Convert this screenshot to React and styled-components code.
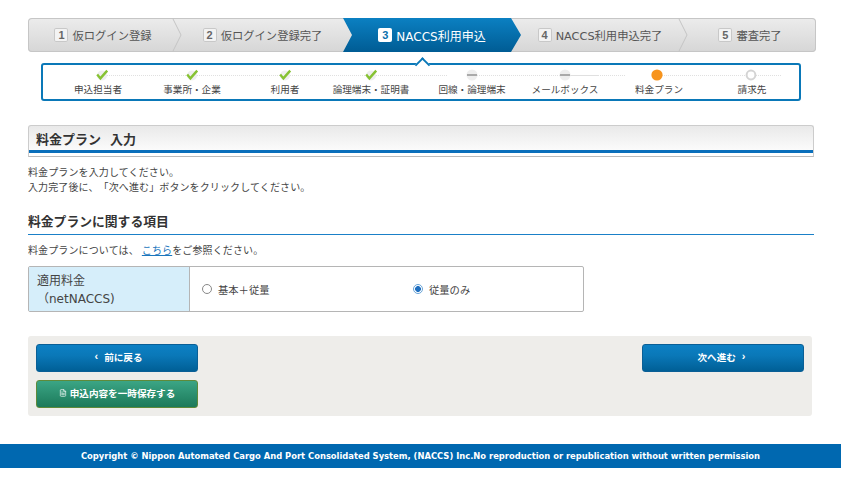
import React from "react";
import styled, { createGlobalStyle } from "styled-components";
import { FileText } from "lucide-react";

const GlobalStyle = createGlobalStyle`
  html, body {
    margin: 0;
    padding: 0;
    background: #fff;
  }
  body {
    font-family: "Noto Sans CJK JP", "Noto Sans", sans-serif;
    color: #333;
    font-size: 10px;
    text-spacing-trim: space-all;
  }
`;

const steps = [
  { no: 1, label: "仮ログイン登録", width: 150 },
  { no: 2, label: "仮ログイン登録完了", width: 169 },
  { no: 3, label: "NACCS利用申込", width: 169, active: true },
  { no: 4, label: "NACCS利用申込完了", width: 168 },
  { no: 5, label: "審査完了", width: 132 },
];

const subSteps = [
  { label: "申込担当者", state: "done", shift: -8 },
  { label: "事業所・企業", state: "done" },
  { label: "利用者", state: "done" },
  { label: "論理端末・証明書", state: "done" },
  { label: "回線・論理端末", state: "skip" },
  { label: "メールボックス", state: "skip" },
  { label: "料金プラン", state: "current", shift: 4 },
  { label: "請求先", state: "todo", shift: 2 },
];

const StepMark = ({ state }) => {
  if (state === "done") {
    return (
      <svg width="14" height="12" viewBox="0 0 14 12">
        <circle cx="7" cy="6.5" r="5" fill="#eeeeee" />
        <path d="M2.2 5.6 L5.4 9.4 L12.2 1.6" fill="none" stroke="#86c232" strokeWidth="2.4" />
      </svg>
    );
  }
  if (state === "skip") {
    return (
      <svg width="14" height="12" viewBox="0 0 14 12">
        <circle cx="7" cy="6" r="5.5" fill="#eeeeee" />
        <rect x="2" y="5" width="10" height="2" fill="#aaaaaa" />
      </svg>
    );
  }
  if (state === "current") {
    return (
      <svg width="14" height="12" viewBox="0 0 14 12">
        <circle cx="7" cy="6" r="5.6" fill="#f7941d" />
      </svg>
    );
  }
  return (
    <svg width="14" height="12" viewBox="0 0 14 12">
      <circle cx="7" cy="6" r="4.4" fill="#fff" stroke="#d4d4d4" strokeWidth="2" />
    </svg>
  );
};

const Divider = () => (
  <ChevronLine width="10" height="34" viewBox="0 0 10 34">
    <path d="M0.5 0 L9 17 L0.5 34" fill="none" stroke="#c4c4c4" />
  </ChevronLine>
);

const App = () => (
  <>
    <GlobalStyle />
    <Page>
      <Stepper>
        {steps.map((s, i) => (
          <Step key={s.no} $width={s.width} $active={s.active}>
            <StepNo $active={s.active}>{s.no}</StepNo>
            <span>{s.label}</span>
            {!s.active && i < steps.length - 1 && !steps[i + 1].active && <Divider />}
          </Step>
        ))}
      </Stepper>

      <SubSteps>
        {subSteps.map((s) => (
          <SubStep key={s.label}>
            <StepMark state={s.state} />
            <SubLabel $shift={s.shift}>{s.label}</SubLabel>
          </SubStep>
        ))}
      </SubSteps>

      <PageTitle>料金プラン 入力</PageTitle>

      <Lead>
        料金プランを入力してください。
        <br />
        入力完了後に、「次へ進む」ボタンをクリックしてください。
      </Lead>

      <SectionTitle>料金プランに関する項目</SectionTitle>
      <Note>
        料金プランについては、<a href="#plan">こちら</a>をご参照ください。
      </Note>

      <PlanTable>
        <PlanHead>
          適用料金
          <br />
          （netNACCS)
        </PlanHead>
        <PlanBody>
          <RadioLabel>
            <Radio />
            基本＋従量
          </RadioLabel>
          <RadioLabel>
            <Radio $checked />
            従量のみ
          </RadioLabel>
        </PlanBody>
      </PlanTable>

      <Actions>
        <ActionColumn>
          <ActionButton>
            <Arrow>‹</Arrow>前に戻る
          </ActionButton>
          <ActionButton $save>
            <FileText size={8} strokeWidth={2} />
            申込内容を一時保存する
          </ActionButton>
        </ActionColumn>
        <ActionButton>
          次へ進む<Arrow>›</Arrow>
        </ActionButton>
      </Actions>
    </Page>
    <Footer>
      Copyright © Nippon Automated Cargo And Port Consolidated System, (NACCS) Inc.No reproduction or republication
      without written permission
    </Footer>
  </>
);

const Page = styled.div`
  width: 788px;
  margin-left: 28px;
  padding-top: 18px;
`;

const Stepper = styled.div`
  display: flex;
  height: 34px;
  border-radius: 4px;
  background: linear-gradient(#ececec, #d6d6d6);
  box-shadow: inset 0 0 0 1px #c6c6c6;
`;

const Step = styled.div`
  position: relative;
  flex: none;
  width: ${(p) => p.$width}px;
  display: flex;
  align-items: center;
  justify-content: center;
  gap: 4px;
  font-family: "DejaVu Sans", "Noto Sans CJK JP", sans-serif;
  font-size: ${(p) => (p.$active ? 12 : 11.3)}px;
  color: ${(p) => (p.$active ? "#fff" : "#555")};
  ${(p) =>
    p.$active &&
    `
    background: linear-gradient(#0b80c2, #005c94);
    clip-path: polygon(0 0, 168px 0, 178px 17px, 168px 34px, 0 34px, 9px 17px);
    margin-left: -4px;
    width: 178px;
    margin-right: -5px;
    z-index: 1;
  `}
`;

const StepNo = styled.span`
  display: inline-flex;
  align-items: center;
  justify-content: center;
  width: 14px;
  height: 14px;
  border-radius: 2px;
  font-size: 11px;
  font-weight: 700;
  font-family: "Liberation Sans", sans-serif;
  background: ${(p) => (p.$active ? "#fff" : "#f3f3f3")};
  color: ${(p) => (p.$active ? "#0a70ac" : "#666")};
  box-shadow: ${(p) => (p.$active ? "none" : "inset 0 0 0 1px #c8c8c8")};
`;

const ChevronLine = styled.svg`
  position: absolute;
  right: -4px;
  top: 0;
`;

const SubSteps = styled.div`
  position: relative;
  box-sizing: border-box;
  width: 760px;
  height: 38px;
  margin: 11px 0 0 13px;
  padding: 0 14px;
  border: 2px solid #0a78b8;
  border-radius: 3px;
  background: #fff;
  display: grid;
  grid-template-columns: 90px 90px 96px 76px 126px 60px 124px 64px;

  &::after {
    content: "";
    position: absolute;
    left: 374px;
    top: -7px;
    width: 9px;
    height: 9px;
    background: #fff;
    border-top: 2px solid #0a78b8;
    border-left: 2px solid #0a78b8;
    transform: rotate(45deg) translate(1px, 1px);
  }
`;

const SubStep = styled.div`
  position: relative;
  display: flex;
  flex-direction: column;
  align-items: center;
  padding-top: 4px;
  white-space: nowrap;

  svg {
    position: relative;
    z-index: 1;
  }

  &:not(:last-child)::after {
    content: "";
    position: absolute;
    left: 50%;
    width: 100%;
    top: 10px;
    border-top: 1px dotted #e0e0e0;
  }
`;

const SubLabel = styled.span`
  font-size: 9.6px;
  line-height: 14px;
  margin-top: 1px;
  margin-left: ${(p) => p.$shift || 0}px;
  color: #444;
`;

const PageTitle = styled.h1`
  box-sizing: border-box;
  height: 32px;
  margin: 24px 0 0;
  padding: 0 0 6px 7px;
  display: flex;
  align-items: center;
  width: 786px;
  font-size: 13px;
  font-weight: 700;
  word-spacing: 6px;
  color: #333;
  border: 1px solid #ccc;
  border-bottom: 1px solid #bbb;
  border-radius: 3px 3px 0 0;
  background: linear-gradient(#e9e9e9, #fbfbfb 24px, #0a6fbb 24px, #0a6fbb 27px, #fff 27px);
`;

const Lead = styled.p`
  margin: 7px 0 0;
  font-size: 10px;
  letter-spacing: 0.12px;
  line-height: 15px;
  color: #444;
`;

const SectionTitle = styled.h2`
  box-sizing: border-box;
  width: 786px;
  height: 24px;
  margin: 17px 0 0;
  font-size: 12.8px;
  line-height: 20px;
  font-weight: 700;
  color: #333;
  border-bottom: 1px solid #1a80c8;
`;

const Note = styled.p`
  margin: 7px 0 0;
  font-size: 10px;
  letter-spacing: 0.12px;
  line-height: 15px;
  color: #444;

  a {
    margin-left: 3px;
    color: #1a76bd;
    text-decoration: underline;
  }
`;

const PlanTable = styled.div`
  box-sizing: border-box;
  width: 556px;
  height: 46px;
  margin-top: 9px;
  display: flex;
  border: 1px solid #b5b5b5;
  border-radius: 2px;
`;

const PlanHead = styled.div`
  box-sizing: border-box;
  flex: none;
  width: 161px;
  padding: 5px 0 0 8px;
  font-family: "DejaVu Sans", "Noto Sans CJK JP", sans-serif;
  font-size: 12px;
  line-height: 18px;
  color: #444;
  background: #d6eefa;
  border-right: 1px solid #b5b5b5;
`;

const PlanBody = styled.div`
  flex: 1;
  display: flex;
  align-items: center;
  padding-left: 12px;
`;

const RadioLabel = styled.label`
  flex: none;
  width: 211px;
  display: flex;
  align-items: center;
  gap: 6px;
  font-size: 10.3px;
  color: #444;
`;

const Radio = styled.span`
  box-sizing: border-box;
  width: 10px;
  height: 10px;
  border-radius: 50%;
  border: 1px solid ${(p) => (p.$checked ? "#6aa5d8" : "#888")};
  background: ${(p) => (p.$checked ? "radial-gradient(circle, #1f6fc0 0 2.6px, #fff 3.2px)" : "#fff")};
`;

const Actions = styled.div`
  box-sizing: border-box;
  width: 784px;
  height: 80px;
  margin-top: 24px;
  padding: 8px;
  display: flex;
  justify-content: space-between;
  align-items: flex-start;
  background: #eeedea;
  border-radius: 3px;
`;

const ActionColumn = styled.div`
  display: flex;
  flex-direction: column;
  gap: 8px;
`;

const ActionButton = styled.button`
  box-sizing: border-box;
  width: 162px;
  height: 28px;
  padding: 0 0 3px;
  display: flex;
  align-items: center;
  justify-content: center;
  gap: 3px;
  font-family: inherit;
  font-size: 9.6px;
  font-weight: 700;
  color: #fff;
  border-radius: 3px;
  border: 1px solid ${(p) => (p.$save ? "#5f8a3a" : "#0a5f96")};
  background: ${(p) =>
    p.$save ? "linear-gradient(#3ba585, #1c7a5a)" : "linear-gradient(#0c80c4 0, #0a78b8 40%, #005f96 100%)"};
`;

const Arrow = styled.span`
  margin: 0 3px;
  font-size: 11px;
  line-height: 1;
  font-family: "Liberation Sans", sans-serif;
`;

const Footer = styled.footer`
  height: 24px;
  margin-top: 28px;
  display: flex;
  align-items: center;
  justify-content: center;
  background: #0068b0;
  color: #fff;
  font-family: "DejaVu Sans", sans-serif;
  font-size: 8.4px;
  font-weight: 700;
  white-space: nowrap;
`;

export default App;
